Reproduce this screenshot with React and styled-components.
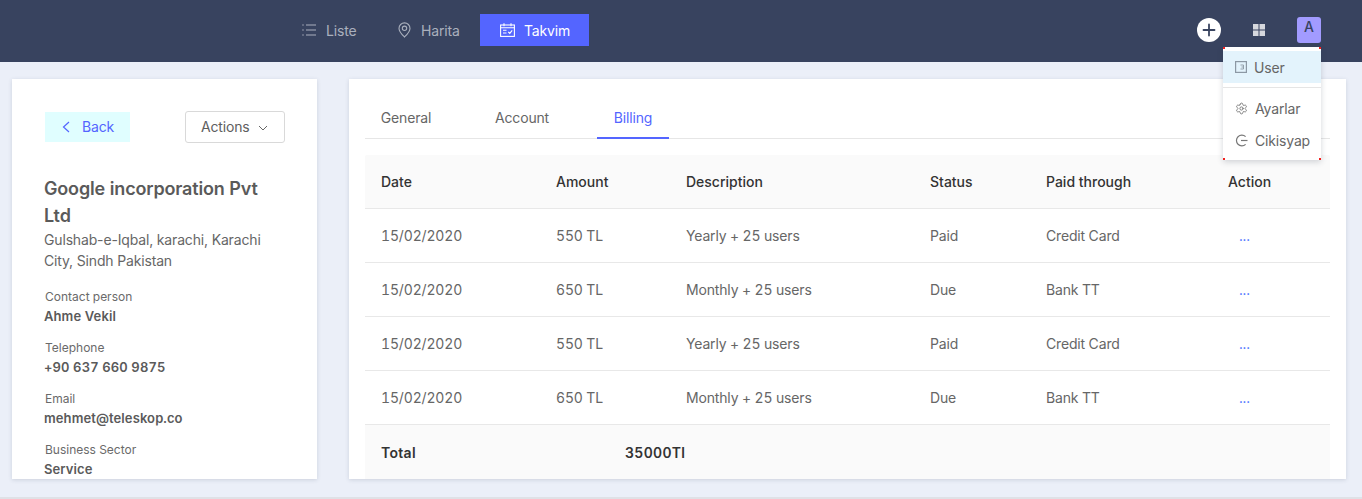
import React from "react";
import styled, { createGlobalStyle } from "styled-components";
import { Settings } from "lucide-react";

const Global = createGlobalStyle`
  html, body { margin: 0; padding: 0; height: 499px; overflow: hidden; background: #ebeff8; }
  body {
    font-family: Inter, "Liberation Sans", sans-serif;
    color: #5e5e5e;
    font-feature-settings: "tnum";
    letter-spacing: -0.16px;
  }
  button { font-feature-settings: "tnum"; letter-spacing: -0.16px; }
  * { box-sizing: border-box; }
`;

const Page = styled.div`
  position: relative;
  width: 1362px;
  height: 499px;
  border-bottom: 2px solid #dfe1e6;
  overflow: hidden;
`;
const Header = styled.header`
  height: 62px;
  background: #38435f;
  display: flex;
  align-items: center;
  padding: 0 41px 0 286px;
`;
const NavList = styled.nav`
  display: flex;
  align-items: center;
  flex: 1;
  margin-top: -2px;
`;
const NavItem = styled.a`
  height: 32px;
  display: flex;
  align-items: center;
  gap: ${(p) => p.$gap}px;
  padding-left: ${(p) => p.$pad}px;
  font-size: 14px;
  width: ${(p) => p.$w}px;
  color: ${(p) => (p.$active ? "#fff" : "#aab0bd")};
  background: ${(p) => (p.$active ? "#5465ff" : "transparent")};
  svg { flex: none; }
`;
const HeaderTools = styled.div`
  display: flex;
  align-items: center;
  margin-top: -2px;
`;
const PlusButton = styled.button`
  width: 24px;
  height: 24px;
  border: 0;
  padding: 0;
  border-radius: 50%;
  background: #fff;
  display: flex;
  align-items: center;
  justify-content: center;
  margin-right: 32px;
`;
const GridButton = styled.span`
  display: flex;
  margin-right: 32px;
`;
const Avatar = styled.div`
  width: 24px;
  height: 26px;
  border-radius: 3px;
  background: #a29bff;
  color: #374260;
  font-size: 14px;
  font-weight: 500;
  line-height: 20px;
  display: flex;
  justify-content: center;
`;
const Menu = styled.div`
  position: absolute;
  left: 1223px;
  top: 47px;
  width: 98px;
  height: 113px;
  background: #fff;
  box-shadow: 0 2px 6px rgba(40, 50, 70, 0.2);
  padding-top: 4px;
  z-index: 5;
`;
const Corner = styled.i`
  position: absolute;
  width: 2px;
  height: 2px;
  background: #f02020;
  ${(p) => (p.$top ? "top: 0;" : "bottom: 0;")}
  ${(p) => (p.$left ? "left: 0;" : "right: 0;")}
`;
const MenuItem = styled.div`
  height: 32px;
  display: flex;
  align-items: center;
  gap: 7px;
  padding-left: 12px;
  font-size: 14px;
  color: #666;
  background: ${(p) => (p.$active ? "#e3f3fc" : "transparent")};
`;
const MenuDivider = styled.div`
  height: 1px;
  margin: 4px 0 4px;
  background: #e5e5e5;
`;
const Main = styled.main`
  display: flex;
  gap: 32px;
  padding: 17px 16px 0 12px;
  align-items: flex-start;
`;
const Card = styled.section`
  background: #fff;
  height: 400px;
  box-shadow: 0 1px 4px rgba(60, 70, 100, 0.18);
  overflow: hidden;
`;
const SideCard = styled(Card)`
  width: 305px;
  flex: none;
  padding: 32px 32px 0 32px;
`;
const ContentCard = styled(Card)`
  flex: 1;
  padding: 20px 16px 0;
`;
const SideActions = styled.div`
  display: flex;
  justify-content: space-between;
  align-items: flex-start;
`;
const BackButton = styled.button`
  width: 85px;
  height: 30px;
  margin: 1px 0 0 1px;
  border: 0;
  background: #e0feff;
  color: #5465ff;
  font: 14px Inter, sans-serif;
  display: flex;
  align-items: center;
  gap: 12px;
  padding: 0 0 1px 17px;
`;
const ActionsButton = styled.button`
  width: 100px;
  height: 32px;
  background: #fff;
  border: 1px solid #d9d9d9;
  border-radius: 3px;
  color: #5e5e5e;
  font: 14px Inter, sans-serif;
  display: flex;
  align-items: center;
  gap: 8px;
  padding: 0 0 2px 15px;
  svg { margin-top: 4px; }
`;
const CompanyName = styled.h1`
  margin: 32px 0 0;
  font-size: 18px;
  line-height: 27px;
  font-weight: 600;
  color: #5a5a5a;
`;
const Address = styled.p`
  margin: 0 0 16px;
  font-size: 14px;
  line-height: 21px;
  color: #666;
  font-feature-settings: normal;
`;
const Field = styled.div`
  margin-bottom: 12px;
`;
const FieldLabel = styled.div`
  font-size: 12px;
  line-height: 19px;
  padding-left: 1px;
  color: #6a6a6a;
  letter-spacing: 0;
`;
const FieldValue = styled.div`
  font-size: 13px;
  line-height: 20px;
  font-weight: 600;
  color: #5a5a5a;
  letter-spacing: 0.1px;
`;
const Tabs = styled.div`
  display: flex;
  gap: 32px;
  height: 40px;
  border-bottom: 1px solid #e6e6e6;
`;
const Tab = styled.div`
  height: 40px;
  width: ${(p) => p.$w}px;
  padding-top: 9px;
  text-align: center;
  font-size: 14px;
  line-height: 20px;
  color: ${(p) => (p.$active ? "#5465ff" : "#666")};
  border-bottom: ${(p) => (p.$active ? "2px solid #5465ff" : "0")};
`;
const Table = styled.div`
  margin-top: 16px;
`;
const Row = styled.div`
  display: grid;
  grid-template-columns: 175px 130px 244px 116px 182px 1fr;
  align-items: center;
  height: 54px;
  padding-left: 16px;
  font-size: 14px;
  border-bottom: 1px solid #e8e8e8;
  color: #666;
`;
const HeadRow = styled(Row)`
  background: #fafafa;
  border-radius: 2px 2px 0 0;
  font-weight: 500;
  color: #333;
  letter-spacing: 0;
`;
const TotalRow = styled.div`
  display: grid;
  grid-template-columns: 244px 1fr;
  align-items: center;
  height: 54px;
  padding-left: 16px;
  background: #fafafa;
  font-size: 14px;
  font-weight: 600;
  color: #333;
  letter-spacing: 0.3px;
`;
const More = styled.a`
  color: #3f6bff;
  padding-left: 11px;
`;

const rows = [
  ["15/02/2020", "550 TL", "Yearly + 25 users", "Paid", "Credit Card"],
  ["15/02/2020", "650 TL", "Monthly + 25 users", "Due", "Bank TT"],
  ["15/02/2020", "550 TL", "Yearly + 25 users", "Paid", "Credit Card"],
  ["15/02/2020", "650 TL", "Monthly + 25 users", "Due", "Bank TT"],
];
const fields = [
  ["Contact person", "Ahme Vekil"],
  ["Telephone", "+90 637 660 9875"],
  ["Email", "mehmet@teleskop.co"],
  ["Business Sector", "Service"],
];

const ListIcon = () => (
  <svg width="14" height="12" viewBox="0 0 14 12" fill="none" stroke="currentColor" strokeWidth="1.1">
    <path d="M4 1h10M4 6h10M4 11h10" />
    <path d="M0.5 1h1M0.5 6h1M0.5 11h1" strokeWidth="1.4" />
  </svg>
);
const PinIcon = () => (
  <svg width="13" height="16" viewBox="0 0 13 16" fill="none" stroke="currentColor" strokeWidth="1.1">
    <path d="M6.5 15C3.5 12 1 9.6 1 6.4a5.5 5.5 0 0 1 11 0C12 9.6 9.5 12 6.5 15z" />
    <circle cx="6.5" cy="6.3" r="2.2" />
  </svg>
);
const CalendarIcon = () => (
  <svg width="15" height="14" viewBox="0 0 15 14" fill="none" stroke="currentColor" strokeWidth="1.1">
    <rect x="0.6" y="2" width="13.8" height="11.4" />
    <path d="M0.6 4.8h13.8M4 0.3v3M11 0.3v3" />
    <path d="M3 7.3h3.5M3 10h3.5M8.2 8.8l1.6 1.6 2.4-3" />
  </svg>
);
const PlusIcon = () => (
  <svg width="14" height="14" viewBox="0 0 14 14" stroke="#38435f" strokeWidth="1.8" strokeLinecap="round">
    <path d="M7 1.5v11M1.5 7h11" />
  </svg>
);
const GridIcon = () => (
  <svg width="12" height="12" viewBox="0 0 12 12" fill="#d6d8dd">
    <rect width="5.5" height="5.5" />
    <rect x="6.5" width="5.5" height="5.5" />
    <rect y="6.5" width="5.5" height="5.5" />
    <rect x="6.5" y="6.5" width="5.5" height="5.5" />
  </svg>
);
const UserIcon = () => (
  <svg width="12" height="12" viewBox="0 0 12 12" fill="none" stroke="#8c98a4" strokeWidth="1.2">
    <rect x="0.6" y="0.6" width="10.8" height="10.8" />
    <path d="M5.5 4h3v4h-3M6.5 6h2" strokeWidth="0.9" />
  </svg>
);
const LogoutIcon = () => (
  <svg width="13" height="13" viewBox="0 0 13 13" fill="none" stroke="#777" strokeWidth="1.2">
    <path d="M10.6 2.6A5.4 5.4 0 1 0 10.6 10.4" />
    <path d="M6 6.5h6.5" />
  </svg>
);
const ChevronLeft = () => (
  <svg width="8" height="12" viewBox="0 0 8 12" fill="none" stroke="#5465ff" strokeWidth="1.2">
    <path d="M7 1L1.5 6 7 11" />
  </svg>
);
const ChevronDown = () => (
  <svg width="10" height="6" viewBox="0 0 10 6" fill="none" stroke="#666" strokeWidth="1">
    <path d="M1 1l4 4 4-4" />
  </svg>
);

export default function App() {
  return (
    <Page>
      <Global />
      <Header>
        <NavList>
          <NavItem $w={94} $pad={16} $gap={10}><ListIcon />Liste</NavItem>
          <NavItem $w={100} $pad={18} $gap={10}><PinIcon />Harita</NavItem>
          <NavItem $w={109} $pad={20} $gap={9} $active><CalendarIcon />Takvim</NavItem>
        </NavList>
        <HeaderTools>
          <PlusButton><PlusIcon /></PlusButton>
          <GridButton><GridIcon /></GridButton>
          <Avatar>A</Avatar>
        </HeaderTools>
      </Header>
      <Menu>
        <Corner $top $left /><Corner $top /><Corner $left /><Corner />
        <MenuItem $active><UserIcon />User</MenuItem>
        <MenuDivider />
        <MenuItem><Settings size={13} color="#777" strokeWidth={1.7} />Ayarlar</MenuItem>
        <MenuItem><LogoutIcon />Cikisyap</MenuItem>
      </Menu>
      <Main>
        <SideCard>
          <SideActions>
            <BackButton><ChevronLeft />Back</BackButton>
            <ActionsButton>Actions<ChevronDown /></ActionsButton>
          </SideActions>
          <CompanyName>Google incorporation Pvt Ltd</CompanyName>
          <Address>Gulshab-e-Iqbal, karachi, Karachi City, Sindh Pakistan</Address>
          {fields.map(([label, value]) => (
            <Field key={label}>
              <FieldLabel>{label}</FieldLabel>
              <FieldValue>{value}</FieldValue>
            </Field>
          ))}
        </SideCard>
        <ContentCard>
          <Tabs>
            <Tab $w={82}>General</Tab>
            <Tab $w={86}>Account</Tab>
            <Tab $w={72} $active>Billing</Tab>
          </Tabs>
          <Table>
            <HeadRow>
              <div>Date</div><div>Amount</div><div>Description</div><div>Status</div><div>Paid through</div><div>Action</div>
            </HeadRow>
            {rows.map((r, i) => (
              <Row key={i}>
                {r.map((c, j) => <div key={j}>{c}</div>)}
                <More>...</More>
              </Row>
            ))}
            <TotalRow><div>Total</div><div>35000Tl</div></TotalRow>
          </Table>
        </ContentCard>
      </Main>
    </Page>
  );
}
